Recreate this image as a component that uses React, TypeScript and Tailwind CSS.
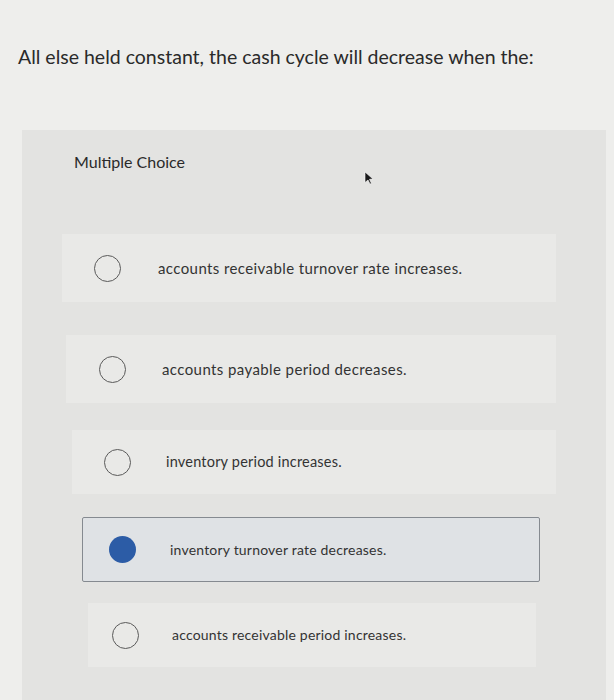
import React from 'react';

type Option = {
  label: string;
  selected?: boolean;
  rowClass: string;
  circleClass: string;
  textClass: string;
};

const options: Option[] = [
  {
    label: 'accounts receivable turnover rate increases.',
    rowClass: 'mt-[62px] ml-[40px] w-[494px] h-[68px]',
    circleClass: 'ml-[32px]',
    textClass: 'ml-[37px] text-[15px] tracking-[0.4px]',
  },
  {
    label: 'accounts payable period decreases.',
    rowClass: 'mt-[33px] ml-[44px] w-[490px] h-[68px]',
    circleClass: 'ml-[33px]',
    textClass: 'ml-[36px] text-[15px] tracking-[0.4px]',
  },
  {
    label: 'inventory period increases.',
    rowClass: 'mt-[27px] ml-[50px] w-[484px] h-[64px]',
    circleClass: 'ml-[32px]',
    textClass: 'ml-[35px] text-[14.5px] tracking-[0.2px]',
  },
  {
    label: 'inventory turnover rate decreases.',
    selected: true,
    rowClass: 'mt-[23px] ml-[60px] w-[458px] h-[65px]',
    circleClass: 'ml-[26px]',
    textClass: 'ml-[34px] text-[14px] tracking-[0.2px]',
  },
  {
    label: 'accounts receivable period increases.',
    rowClass: 'mt-[21px] ml-[66px] w-[448px] h-[64px]',
    circleClass: 'ml-[24px]',
    textClass: 'ml-[33px] text-[14px] tracking-[0.2px]',
  },
];

const App = () => {
  return (
    <div className="w-[614px] h-[700px] overflow-hidden bg-[#eeeeec] text-[#2a2a2a] font-['Lato','Liberation_Sans',sans-serif]">
      {/* Question */}
      <p className="pt-[45px] pl-[18px] text-[19.5px] leading-[24px]">
        All else held constant, the cash cycle will decrease when the:
      </p>

      {/* Answer panel */}
      <div className="relative mt-[61px] ml-[22px] w-[584px] h-[600px] bg-[#e3e3e1]">
        <p className="pt-[22px] pl-[52px] text-[16px] leading-[20px]">Multiple Choice</p>

        {/* mouse pointer */}
        <svg className="absolute left-[341px] top-[41px]" width="12" height="14" viewBox="0 0 12 14">
          <path d="M2 1 L10 8 L6.5 8.3 L8.5 12.5 L7 13 L5 9 L2 11.5 Z" fill="#1a1a1a" stroke="#fff" strokeWidth="0.6" />
        </svg>

        {options.map(opt => (
          <div
            key={opt.label}
            className={`flex items-center ${opt.rowClass} ${
              opt.selected ? 'bg-[#dfe2e5] border border-[#858a90] rounded-[2px]' : 'bg-[#e9e9e7]'
            }`}
          >
            {opt.selected ? (
              <span className={`${opt.circleClass} w-[27px] h-[27px] rounded-full bg-[#2c5ca6] shrink-0`} />
            ) : (
              <span className={`${opt.circleClass} w-[27px] h-[27px] rounded-full border-[1.5px] border-[#5a5a5a] shrink-0`} />
            )}
            <span className={`${opt.textClass} leading-[18px] text-[#333]`}>{opt.label}</span>
          </div>
        ))}
      </div>
    </div>
  );
};

export default App;
